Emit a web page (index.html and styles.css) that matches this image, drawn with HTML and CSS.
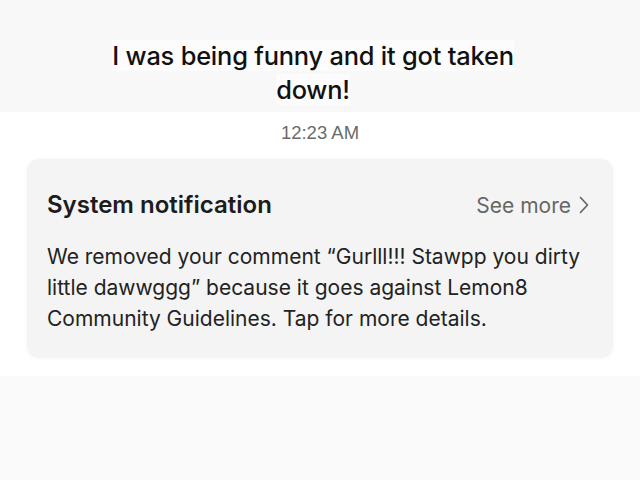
FILE: index.html
```html
<!DOCTYPE html>
<html>
<head>
<meta charset="utf-8">
<link rel="stylesheet" href="styles.css">
</head>
<body>
<div class="page">
  <header class="caption">
    <h1 class="title"><span class="hl">I was being funny and it got taken</span><br><span class="hl">down!</span></h1>
  </header>
  <main class="chat">
    <div class="time">12:23 AM</div>
    <section class="card">
      <div class="card-head">
        <h2 class="card-title">System notification</h2>
        <a class="see-more">See more
          <svg class="chev" width="10" height="18" viewBox="0 0 10 18"><path d="M1.5 1.5 L8.5 9 L1.5 16.5" fill="none" stroke="#666" stroke-width="1.7" stroke-linecap="round" stroke-linejoin="round"/></svg>
        </a>
      </div>
      <p class="card-body">We removed your comment “Gurlll!!! Stawpp you dirty little dawwggg” because it goes against Lemon8 Community Guidelines. Tap for more details.</p>
    </section>
  </main>
  <div class="bottom"></div>
</div>
</body>
</html>
```
FILE: styles.css
```css
html, body {
  margin: 0;
  padding: 0;
  background: #fafafa;
}
.page {
  width: 640px;
  height: 480px;
  display: flex;
  flex-direction: column;
  overflow: hidden;
}
.caption {
  background: #f8f8f8;
  height: 112px;
  padding: 39px 14px 0 0;
  box-sizing: border-box;
}
.title {
  margin: 0;
  text-align: center;
  font-family: "Inter", "Lato", sans-serif;
  font-weight: 500;
  font-size: 25.4px;
  line-height: 34px;
  color: #111;
  letter-spacing: -0.2px;
}
.hl {
  background: #fcfcfc;
}
.chat {
  background: #ffffff;
  padding: 9px 27px 18px;
  display: flex;
  flex-direction: column;
  align-items: stretch;
}
.time {
  text-align: center;
  font-family: "Liberation Sans", Arial, sans-serif;
  font-size: 18.5px;
  color: #6a6a6a;
  line-height: 24px;
  margin-bottom: 14px;
}
.card {
  background: #f4f4f4;
  border-radius: 12px;
  box-shadow: 0 0 4px rgba(0,0,0,0.04);
  padding: 30px 24px 24px 20px;
}
.card-head {
  display: flex;
  justify-content: space-between;
  align-items: center;
}
.card-title {
  margin: 0;
  font-family: "Inter", sans-serif;
  font-weight: 600;
  font-size: 24px;
  line-height: 32px;
  color: #1c1c1c;
}
.see-more {
  display: flex;
  align-items: center;
  gap: 8px;
  font-family: "Inter", sans-serif;
  font-size: 21px;
  color: #666;
}
.card-body {
  margin: 20px 0 0;
  font-family: "Inter", sans-serif;
  font-size: 21px;
  line-height: 31px;
  color: #222;
}
.bottom {
  flex: 1;
  background: #fafafa;
}
```
